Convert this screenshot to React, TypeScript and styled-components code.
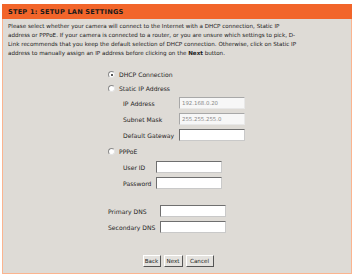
import React, { useState } from "react";
import styled, { createGlobalStyle } from "styled-components";

const GlobalStyle = createGlobalStyle`
  html, body {
    margin: 0;
    padding: 0;
    background: #fff;
  }
  body {
    font-family: "DejaVu Sans", Verdana, sans-serif;
    color: #1e1e1e;
  }
`;

const Page = styled.div`
  padding: 4px 3px 0 2px;
  width: 355px;
  box-sizing: border-box;
`;

const Panel = styled.div`
  background: #dedbd6;
  border: 1px solid #fbb48f;
  border-top: none;
  padding-bottom: 6px;
`;

const Header = styled.div`
  background: #f2652a;
  height: 15px;
  display: flex;
  align-items: center;
  padding-left: 6px;
  font-weight: bold;
  font-size: 6.6px;
  letter-spacing: 0.2px;
  color: #1a1a1a;
  margin: 0 -1px;
`;

const Intro = styled.p`
  margin: 0;
  padding: 3px 5px 0 5px;
  font-size: 5.6px;
  line-height: 9px;
  color: #1a1a1a;
  white-space: nowrap;
`;

const Form = styled.div`
  display: flex;
  flex-direction: column;
  margin-top: 10px;
  font-size: 6.1px;
`;

const RadioRow = styled.label<{ $h?: number }>`
  display: flex;
  align-items: center;
  gap: 4px;
  height: ${(p) => p.$h ?? 13}px;
  margin-left: 105px;
  color: #1e1e1e;
  cursor: pointer;
`;

const RadioDot = styled.span<{ $on: boolean }>`
  width: 5px;
  height: 5px;
  border-radius: 50%;
  background: #fff;
  border: 1px solid #8a8a8a;
  border-bottom-color: #e4e4e4;
  border-right-color: #e4e4e4;
  display: flex;
  align-items: center;
  justify-content: center;
  &::after {
    content: "";
    width: 2px;
    height: 2px;
    border-radius: 50%;
    background: ${(p) => (p.$on ? "#222" : "transparent")};
  }
`;

const FieldGrid = styled.div<{ $left: number; $label: number; $top?: number }>`
  display: grid;
  grid-template-columns: ${(p) => p.$label}px 66px;
  grid-auto-rows: 16px;
  align-items: center;
  margin-left: ${(p) => p.$left}px;
  margin-top: ${(p) => p.$top ?? 0}px;
`;

const Label = styled.span`
  white-space: nowrap;
`;

const Field = styled.input`
  box-sizing: border-box;
  width: 66px;
  height: 12px;
  padding: 0 2px;
  font-family: "DejaVu Sans", Verdana, sans-serif;
  font-size: 5.4px;
  color: #222;
  background: #fff;
  border: 1px solid #c9c9c9;
  border-top-color: #6f6f6f;
  border-left-color: #6f6f6f;
  outline: none;

  &:disabled {
    background: #f7f7f7;
    color: #8a8a8a;
    border-color: #a8a8a8 #e8e8e8 #e8e8e8 #a8a8a8;
  }
`;

const Buttons = styled.div`
  display: flex;
  justify-content: center;
  gap: 3px;
  margin-top: 20px;
  padding-left: 2px;
`;

const Button = styled.button<{ $w: number }>`
  box-sizing: border-box;
  width: ${(p) => p.$w}px;
  height: 12px;
  padding: 0;
  font-family: "DejaVu Sans", Verdana, sans-serif;
  font-size: 5.6px;
  color: #222;
  background: #e4e2de;
  border: 1px solid #fff;
  border-right-color: #555;
  border-bottom-color: #555;
  cursor: pointer;
`;

type Mode = "dhcp" | "static" | "pppoe";

export default function App() {
  const [mode, setMode] = useState<Mode>("dhcp");

  return (
    <>
      <GlobalStyle />
      <Page>
        <Panel>
          <Header>STEP 1: SETUP LAN SETTINGS</Header>
          <Intro>
            Please select whether your camera will connect to the Internet with a DHCP connection, Static IP
            <br />
            address or PPPoE. If your camera is connected to a router, or you are unsure which settings to pick, D-
            <br />
            Link recommends that you keep the default selection of DHCP connection. Otherwise, click on Static IP
            <br />
            address to manually assign an IP address before clicking on the <b>Next</b> button.
          </Intro>

          <Form>
            <RadioRow onClick={() => setMode("dhcp")}>
              <RadioDot $on={mode === "dhcp"} />
              DHCP Connection
            </RadioRow>
            <RadioRow onClick={() => setMode("static")} $h={14}>
              <RadioDot $on={mode === "static"} />
              Static IP Address
            </RadioRow>

            <FieldGrid $left={120} $label={56}>
              <Label>IP Address</Label>
              <Field defaultValue="192.168.0.20" disabled={mode !== "static"} />
              <Label>Subnet Mask</Label>
              <Field defaultValue="255.255.255.0" disabled={mode !== "static"} />
              <Label>Default Gateway</Label>
              <Field />
            </FieldGrid>

            <RadioRow onClick={() => setMode("pppoe")} $h={16}>
              <RadioDot $on={mode === "pppoe"} />
              PPPoE
            </RadioRow>

            <FieldGrid $left={120} $label={33}>
              <Label>User ID</Label>
              <Field />
              <Label>Password</Label>
              <Field type="password" />
            </FieldGrid>

            <FieldGrid $left={105} $label={52} $top={12}>
              <Label>Primary DNS</Label>
              <Field />
              <Label>Secondary DNS</Label>
              <Field />
            </FieldGrid>

            <Buttons>
              <Button $w={18}>Back</Button>
              <Button $w={19}>Next</Button>
              <Button $w={28}>Cancel</Button>
            </Buttons>
          </Form>
        </Panel>
      </Page>
    </>
  );
}
